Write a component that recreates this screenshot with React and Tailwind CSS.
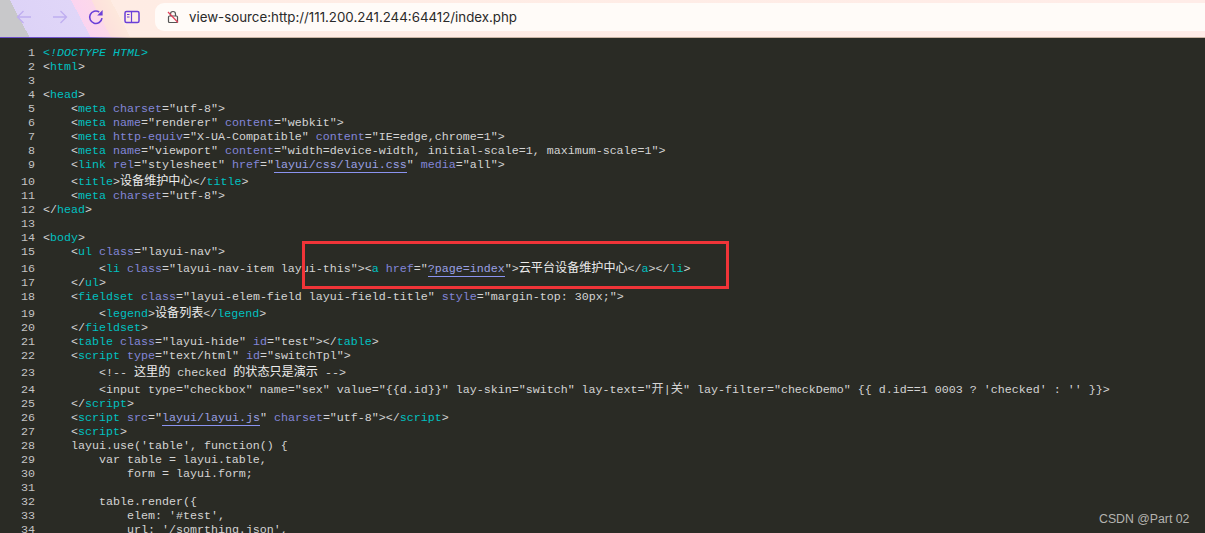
import React from "react";

const T = ({ children }) => <span className="text-[#00c0c0]">{children}</span>;
const A = ({ children }) => <span className="text-[#8286d8]">{children}</span>;
const L = ({ children }) => <span className="border-b border-[#8a93f0] text-[#9aa0e4]">{children}</span>;
const C = ({ children }) => <span className="text-[12.1px] text-[#ececec]">{children}</span>;

// one entry per source line: [indent, content, has cjk text]
const lines = [
  [0, <span className="italic text-[#00c0c0]">{"<!DOCTYPE HTML>"}</span>],
  [0, <>{"<"}<T>html</T>{">"}</>],
  [0, ""],
  [0, <>{"<"}<T>head</T>{">"}</>],
  [4, <>{"<"}<T>meta</T> <A>charset</A>{'="utf-8">'}</>],
  [4, <>{"<"}<T>meta</T> <A>name</A>{'="renderer" '}<A>content</A>{'="webkit">'}</>],
  [4, <>{"<"}<T>meta</T> <A>http-equiv</A>{'="X-UA-Compatible" '}<A>content</A>{'="IE=edge,chrome=1">'}</>],
  [4, <>{"<"}<T>meta</T> <A>name</A>{'="viewport" '}<A>content</A>{'="width=device-width, initial-scale=1, maximum-scale=1">'}</>],
  [4, <>{"<"}<T>link</T> <A>rel</A>{'="stylesheet" '}<A>href</A>{'="'}<L>layui/css/layui.css</L>{'" '}<A>media</A>{'="all">'}</>],
  [4, <>{"<"}<T>title</T>{">"}<C>设备维护中心</C>{"</"}<T>title</T>{">"}</>, true],
  [4, <>{"<"}<T>meta</T> <A>charset</A>{'="utf-8">'}</>],
  [0, <>{"</"}<T>head</T>{">"}</>],
  [0, ""],
  [0, <>{"<"}<T>body</T>{">"}</>],
  [4, <>{"<"}<T>ul</T> <A>class</A>{'="layui-nav">'}</>],
  [8, <>{"<"}<T>li</T> <A>class</A>{'="layui-nav-item layui-this"><'}<T>a</T> <A>href</A>{'="'}<L>?page=index</L>{'">'}<C>云平台设备维护中心</C>{"</"}<T>a</T>{"></"}<T>li</T>{">"}</>, true],
  [4, <>{"</"}<T>ul</T>{">"}</>],
  [4, <>{"<"}<T>fieldset</T> <A>class</A>{'="layui-elem-field layui-field-title" '}<A>style</A>{'="margin-top: 30px;">'}</>],
  [8, <>{"<"}<T>legend</T>{">"}<C>设备列表</C>{"</"}<T>legend</T>{">"}</>, true],
  [4, <>{"</"}<T>fieldset</T>{">"}</>],
  [4, <>{"<"}<T>table</T> <A>class</A>{'="layui-hide" '}<A>id</A>{'="test"></'}<T>table</T>{">"}</>],
  [4, <>{"<"}<T>script</T> <A>type</A>{'="text/html" '}<A>id</A>{'="switchTpl">'}</>],
  [8, <>{"<!-- "}<C>这里的</C>{" checked "}<C>的状态只是演示</C>{" -->"}</>, true],
  [8, <>{'<input type="checkbox" name="sex" value="{{d.id}}" lay-skin="switch" lay-text="'}<span className="text-[12.2px]">开</span>|<span className="text-[12.2px]">关</span>{'" lay-filter="checkDemo" {{ d.id==1 0003 ? \'checked\' : \'\' }}>'}</>, true],
  [4, <>{"</"}<T>script</T>{">"}</>],
  [4, <>{"<"}<T>script</T> <A>src</A>{'="'}<L>layui/layui.js</L>{'" '}<A>charset</A>{'="utf-8"></'}<T>script</T>{">"}</>],
  [4, <>{"<"}<T>script</T>{">"}</>],
  [4, "layui.use('table', function() {"],
  [8, "var table = layui.table,"],
  [12, "form = layui.form;"],
  [0, ""],
  [8, "table.render({"],
  [12, "elem: '#test',"],
  [12, "url: '/somrthing.json',"],
];

export default function App() {
  return (
    <div className="relative flex h-[533px] w-[1205px] flex-col overflow-hidden bg-[#2a2b25]">
      {/* browser toolbar */}
      <div className="flex h-[37px] shrink-0 items-start bg-[linear-gradient(62deg,#c8c8ca_0px,#c8c8ca_26px,#ddd3f7_26px,#e0d6f8_80px,#fbd4f0_80px,#fcd8ea_98px,#fde0dc_98px,#fde8dc_115px,#feece4_115px,#ffece8_1081px)]">
        <div className="flex h-[34px] items-center pl-[16px]">
          <svg width="16" height="16" viewBox="0 0 16 16" fill="none" stroke="#bfaef0" strokeWidth="1.3">
            <path d="M15 8H1.5M7.5 2L1.5 8l6 6" />
          </svg>
          <svg className="ml-[20px]" width="16" height="16" viewBox="0 0 16 16" fill="none" stroke="#bfaef0" strokeWidth="1.3">
            <path d="M1 8h13.5M8.5 2l6 6-6 6" />
          </svg>
          <svg className="ml-[20px]" width="16" height="16" viewBox="0 0 16 16" fill="none" stroke="#6a3fd8" strokeWidth="1.6">
            <path d="M14 9.2A6.2 6.2 0 1 1 11.2 3" />
            <path d="M14.6 1v5.4H9.2z" fill="#6a3fd8" stroke="none" />
          </svg>
          <svg className="ml-[20px]" width="16" height="14" viewBox="0 0 16 14" fill="none" stroke="#6a3fd8" strokeWidth="1.5">
            <rect x="1" y="1.5" width="14" height="11" rx="1.5" />
            <path d="M7.5 1.5v11M3 4.5h2.5M3 7h2.5" strokeWidth="1.2" />
          </svg>
        </div>
        <div className="ml-[15px] mt-[3px] flex h-[28px] flex-1 items-center rounded-l-[9px] bg-[#fffbf8] pl-[11px]">
          <svg width="14" height="14" viewBox="0 0 14 14" fill="none" stroke="#555" strokeWidth="1.2">
            <rect x="2.5" y="6" width="9" height="6.5" rx="1" />
            <path d="M4.5 6V4a2.5 2.5 0 0 1 5 0v2" />
            <path d="M2 2l10 10.5" stroke="#e0405a" />
          </svg>
          <span className="ml-[9px] pt-[2px] font-['Inter','Noto_Sans',sans-serif] text-[13.3px] text-[#2a2a2a]">
            view-source:http://111.200.241.244:64412/index.php
          </span>
        </div>
      </div>
      <div className="h-px shrink-0 bg-[linear-gradient(90deg,#6a4cc8_0px,#7a5cd0_90px,#c9b4a4_130px,#c9b4a4_1205px)]" />

      {/* source listing */}
      <div className="pt-[8px] font-['Liberation_Mono','Noto_Sans_CJK_SC',monospace] text-[11.67px] text-[#d4d4d4]">
        {lines.map(([indent, content, cjk], i) => (
          <div key={i} className={`flex items-end leading-[14px] ${cjk ? "h-[17px]" : "h-[14px]"}`}>
            <span className="w-[35px] shrink-0 text-right text-[#c4c4c4]">{i + 1}</span>
            <span className="ml-[8px] whitespace-pre">
              {" ".repeat(indent)}
              {content}
            </span>
          </div>
        ))}
      </div>

      {/* red annotation box */}
      <div className="absolute left-[302px] top-[241px] h-[48px] w-[427px] border-[3px] border-[#f03438]" />

      <span className="absolute left-[1099px] top-[510px] font-['Liberation_Sans',sans-serif] text-[12.3px] text-[#b4b4b0]">
        CSDN @Part 02
      </span>
    </div>
  );
}
